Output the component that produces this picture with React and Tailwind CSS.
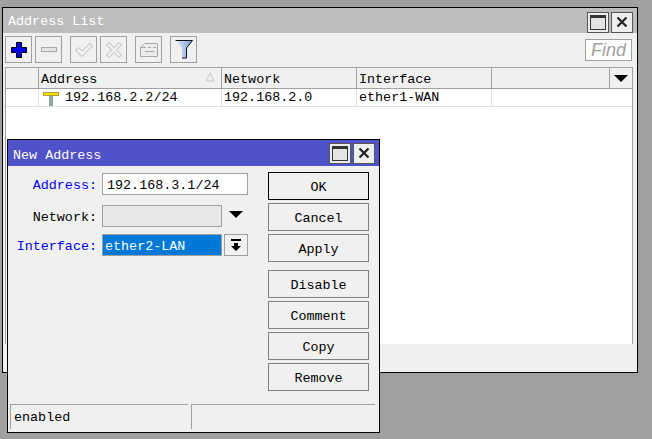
const mono = "font-['Liberation_Mono',monospace] text-[13.4px] text-black";

const ToolButton = ({ children, className = "" }) => (
  <div className={`flex h-[27px] w-[27px] shrink-0 items-center justify-center border border-[#a0a0a0] bg-[#f0f0f0] ${className}`}>
    {children}
  </div>
);

const WinButtons = () => (
  <div className="flex gap-[2px]">
    <div className="flex h-[21px] w-[22px] items-center justify-center border border-[#555] bg-[#eee]">
      <div className="h-[15px] w-[16px] border border-[#333] border-t-[3px] bg-[#e4e4e4]" />
    </div>
    <div className="flex h-[21px] w-[22px] items-center justify-center border border-[#555] bg-[#eee]">
      <svg width="14" height="14" viewBox="0 0 14 14">
        <path d="M2.5 2.5 L11.5 11.5 M11.5 2.5 L2.5 11.5" stroke="#222" strokeWidth="2.2" />
      </svg>
    </div>
  </div>
);

const columns = [
  { w: "w-[33px]", head: "", cell: "" },
  { w: "w-[183px]", head: "Address", cell: "192.168.2.2/24" },
  { w: "w-[135px]", head: "Network", cell: "192.168.2.0" },
  { w: "w-[135px]", head: "Interface", cell: "ether1-WAN" },
];

const AddressList = () => (
  <div className="absolute left-[2px] top-[7px] flex h-[366px] w-[636px] flex-col border border-black bg-[#f0f0f0]">
    <div className="flex h-[25px] shrink-0 items-center justify-between bg-[#bdbdbd] pl-[5px] pr-[4px]">
      <span className="pt-[4px] font-['Liberation_Mono',monospace] text-[13.4px] text-white">Address List</span>
      <div className="mt-[3px]"><WinButtons /></div>
    </div>
    <div className="flex h-[34px] shrink-0 items-start pl-[2px] pr-[5px] pt-[3px]">
      <ToolButton>
        <svg width="16" height="16" viewBox="0 0 16 16">
          <path d="M5.5 .5h5v5h5v5h-5v5h-5v-5h-5v-5h5z" fill="#0000f0" stroke="#000" />
        </svg>
      </ToolButton>
      <ToolButton className="ml-[3px]">
        <div className="h-[5px] w-[16px] border border-[#a8a8a8] bg-[#e4e4e4]" />
      </ToolButton>
      <ToolButton className="ml-[8px]">
        <svg width="20" height="16" viewBox="0 0 20 16">
          <path d="M1.5 8.5 L4.5 5.5 L8 9 L16 1.5 L18.5 4 L8 14.5 Z" fill="#f0f0f0" stroke="#b8b8b8" />
        </svg>
      </ToolButton>
      <ToolButton className="ml-[3px]">
        <svg width="18" height="18" viewBox="0 0 18 18">
          <path d="M4 1.5 L9 6.5 L14 1.5 L16.5 4 L11.5 9 L16.5 14 L14 16.5 L9 11.5 L4 16.5 L1.5 14 L6.5 9 L1.5 4 Z" fill="#f0f0f0" stroke="#b8b8b8" />
        </svg>
      </ToolButton>
      <ToolButton className="ml-[8px]">
        <svg width="20" height="16" viewBox="0 0 20 16">
          <path d="M1.5 14.5 V5.5 L5.5 1.5 H18.5 V14.5 Z M1.5 5.5 H7 M9 5.5 H12 M14 5.5 H17 M6 9.5 H15" fill="#ececec" stroke="#a8a8a8" />
        </svg>
      </ToolButton>
      <ToolButton className="ml-[8px]">
        <svg width="18" height="19" viewBox="0 0 18 19">
          <defs>
            <linearGradient id="funnel" x1="0" x2="1" y1="0" y2="0">
              <stop offset="0" stopColor="#e4ecf8" />
              <stop offset="1" stopColor="#7f9fd8" />
            </linearGradient>
          </defs>
          <path d="M.5 .5 H17.5 L11.5 8 V18 H7 V8 Z" fill="url(#funnel)" />
          <path d="M.5 .5 H17.5 L11.5 8 V18 H7" fill="none" stroke="#111" />
        </svg>
      </ToolButton>
      <div className="ml-auto mt-[3px] flex h-[22px] w-[47px] items-center justify-center border border-[#a0a0a0] bg-white font-['Liberation_Sans',sans-serif] text-[18px] italic text-[#a0a0a0]">
        Find
      </div>
    </div>
    <div className="ml-[2px] mr-[4px] flex min-h-0 flex-1 flex-col border-l border-r border-t border-[#a0a0a0] bg-white">
      <div className="flex h-[21px] shrink-0 border-b border-[#a0a0a0] bg-[#f0f0f0]">
        {columns.map((c, i) => (
          <div key={i} className={`relative flex items-center border-r border-[#a0a0a0] pl-[2px] pt-[4px] ${c.w} ${mono}`}>
            {c.head}
            {c.head === "Address" && (
              <svg className="absolute right-[6px] top-[4px]" width="10" height="10" viewBox="0 0 10 10">
                <path d="M5 1 L9 9 H1 Z" fill="none" stroke="#c8c8c8" />
              </svg>
            )}
          </div>
        ))}
        <div className="w-[118px] border-r border-[#a0a0a0]" />
        <div className="flex flex-1 items-center justify-center">
          <div className="h-0 w-0 border-x-[7px] border-t-[7px] border-x-transparent border-t-black" />
        </div>
      </div>
      <div className="flex h-[18px] shrink-0 border-b border-[#e0e0e0]">
        {columns.map((c, i) => (
          <div key={i} className={`flex items-center border-r border-[#e0e0e0] pl-[2px] pt-[2px] ${c.w} ${mono}`}>
            {c.head === "Address" && (
              <svg className="-mt-[2px] ml-[2px] mr-[6px]" width="16" height="16" viewBox="0 0 16 16">
                <rect x="6" y="2" width="4" height="14" fill="#90a8a0" />
                <rect x=".5" y="2.5" width="15" height="3" fill="#f4e000" stroke="#b0a030" />
              </svg>
            )}
            {c.cell}
          </div>
        ))}
      </div>
    </div>
    <div className="h-[28px] shrink-0 bg-[#f0f0f0]" />
  </div>
);

const DialogButton = ({ label, active, className = "" }) => (
  <div className={`flex h-[28px] w-[101px] items-center justify-center border bg-[#f0f0f0] pt-[4px] ${active ? "border-black" : "border-[#808080]"} ${mono} ${className}`}>
    {label}
  </div>
);

const NewAddress = () => (
  <div className="absolute left-[7px] top-[139px] flex h-[294px] w-[373px] flex-col border border-black bg-[#f0f0f0]">
    <div className="flex h-[26px] shrink-0 items-center justify-between bg-[#5052c8] pl-[5px] pr-[4px]">
      <span className="pt-[6px] font-['Liberation_Mono',monospace] text-[13.4px] text-white">New Address</span>
      <WinButtons />
    </div>
    <div className="flex flex-1 justify-between pl-[4px] pr-[10px] pt-[7px]">
      <div className="flex w-[239px] flex-col">
        <div className="flex h-[22px] items-center">
          <span className={`w-[85px] pt-[4px] text-right ${mono} !text-[#0000f0]`}>Address:</span>
          <div className={`ml-[5px] flex h-[22px] w-[146px] items-center border border-[#a0a0a0] bg-white pl-[4px] pt-[4px] ${mono}`}>192.168.3.1/24</div>
        </div>
        <div className="mt-[10px] flex h-[22px] items-center">
          <span className={`w-[85px] pt-[4px] text-right ${mono}`}>Network:</span>
          <div className="ml-[5px] h-[22px] w-[120px] border border-[#a0a0a0] bg-[#e8e8e8]" />
          <div className="mb-[3px] ml-[7px] h-0 w-0 border-x-[7px] border-t-[7px] border-x-transparent border-t-black" />
        </div>
        <div className="mt-[7px] flex h-[22px] items-center">
          <span className={`w-[85px] pt-[4px] text-right ${mono} !text-[#0000f0]`}>Interface:</span>
          <div className={`ml-[5px] flex h-[22px] w-[120px] items-center border border-[#a0a0a0] bg-[#0078d7] pl-[2px] pt-[4px] ${mono} !text-white`}>ether2-LAN</div>
          <div className="ml-[2px] flex h-[22px] w-[24px] items-center justify-center border border-[#a0a0a0]">
            <svg width="12" height="14" viewBox="0 0 12 14">
              <rect x="1" y="1" width="10" height="2" fill="#000" />
              <path d="M4 5 H8 V8 H11 L6 13 L1 8 H4 Z" fill="#000" />
            </svg>
          </div>
        </div>
      </div>
      <div className="-mt-[1px] flex flex-col gap-[3px]">
        <DialogButton label="OK" active />
        <DialogButton label="Cancel" />
        <DialogButton label="Apply" />
        <DialogButton label="Disable" className="mt-[5px]" />
        <DialogButton label="Comment" />
        <DialogButton label="Copy" />
        <DialogButton label="Remove" />
      </div>
    </div>
    <div className="mb-[3px] flex h-[25px] shrink-0 gap-[3px] pl-[2px] pr-[4px]">
      <div className={`flex w-[178px] items-center border-l border-t border-[#a0a0a0] pl-[3px] pt-[2px] ${mono}`}>enabled</div>
      <div className="flex-1 border-l border-t border-[#a0a0a0]" />
    </div>
  </div>
);

export default function App() {
  return (
    <div className="relative h-[439px] w-[652px] overflow-hidden bg-[#a0a0a0]">
      <AddressList />
      <NewAddress />
    </div>
  );
}
